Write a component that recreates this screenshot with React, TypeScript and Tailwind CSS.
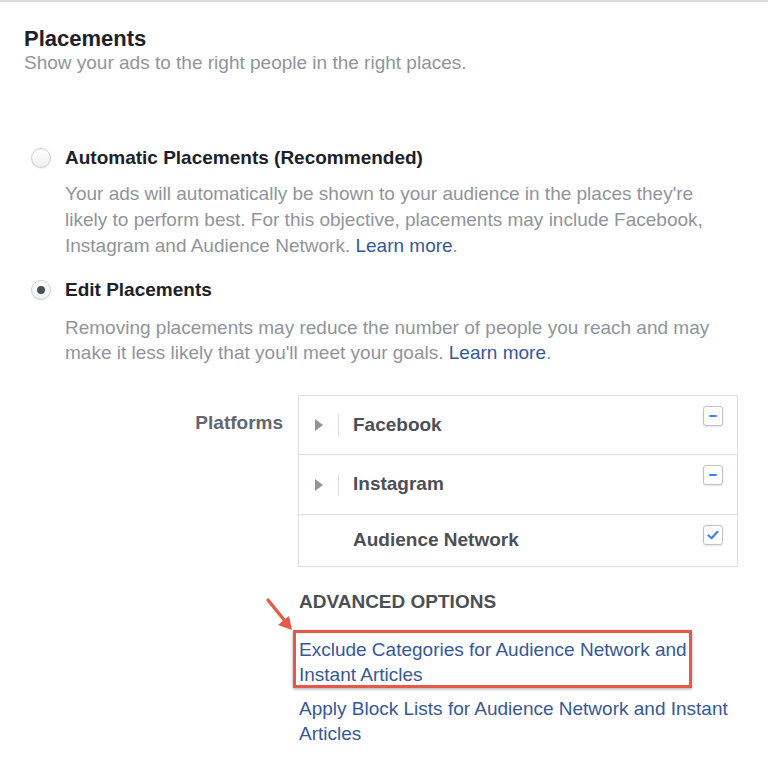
import React from "react";

function Radio({ checked }: { checked?: boolean }) {
  return (
    <div className="w-5 h-5 rounded-full border border-[#ccd0d5] bg-gradient-to-b from-white to-[#eef0f2] flex items-center justify-center shadow-[0_1px_1px_rgba(0,0,0,0.06)]">
      {checked && <div className="w-2 h-2 rounded-full bg-[#4b4f56]"></div>}
    </div>
  );
}

function Checkbox({ mode }: { mode: "minus" | "check" }) {
  return (
    <div className="w-5 h-5 rounded-[3px] border border-[#bec3c9] bg-white shadow-[0_1px_2px_rgba(0,0,0,0.12)] flex items-center justify-center">
      {mode === "minus" ? (
        <div className="w-2 h-[2px] bg-[#4080ff] rounded-sm"></div>
      ) : (
        <svg width="12" height="10" viewBox="0 0 12 10">
          <path d="M1.5 5.5 L4.5 8.3 L10.5 1.8" fill="none" stroke="#4080ff" strokeWidth="2.2" strokeLinecap="round" strokeLinejoin="round" />
        </svg>
      )}
    </div>
  );
}

function PlatformRow({ name, expandable, mode, className }: { name: string; expandable?: boolean; mode: "minus" | "check"; className?: string }) {
  return (
    <div className={`relative flex items-center ${className ?? ""}`}>
      {expandable ? (
        <>
          <svg className="ml-4" width="8" height="12" viewBox="0 0 8 12">
            <path d="M0 0 L8 6 L0 12 Z" fill="#8d949e" />
          </svg>
          <div className="ml-[15px] w-px h-[22px] bg-[#dddfe2]"></div>
          <span className="ml-[14px] text-[19px] font-bold text-[#4b4f56]">{name}</span>
        </>
      ) : (
        <span className="ml-[54px] text-[19px] font-bold text-[#4b4f56]">{name}</span>
      )}
      <div className="absolute right-[14px] top-[10px]">
        <Checkbox mode={mode} />
      </div>
    </div>
  );
}

export default function App() {
  return (
    <div className="relative w-[768px] h-[774px] overflow-hidden bg-white border-t-2 border-[#d9dbde] font-['Liberation_Sans',Arial,sans-serif]">
      <div className="pl-6 pt-6">
        <h2 className="text-[22px] leading-[26px] font-bold text-[#1d2129]">Placements</h2>
        <p className="text-[19px] leading-[22px] text-[#90949c]">Show your ads to the right people in the right places.</p>
      </div>

      <div className="pl-[31px] mt-[71px] flex items-center h-[26px]">
        <Radio />
        <span className="ml-[14px] text-[19px] font-bold text-[#1d2129]">Automatic Placements (Recommended)</span>
      </div>
      <p className="ml-[65px] mt-[10px] text-[19px] leading-[26px] text-[#90949c]">
        Your ads will automatically be shown to your audience in the places they're
        <br />
        likely to perform best. For this objective, placements may include Facebook,
        <br />
        Instagram and Audience Network. <span className="text-[#365899]">Learn more</span>.
      </p>

      <div className="pl-[31px] mt-[18px] flex items-center h-[26px]">
        <Radio checked />
        <span className="ml-[14px] text-[19px] font-bold text-[#1d2129]">Edit Placements</span>
      </div>
      <p className="ml-[65px] mt-[12px] text-[19px] leading-[25px] text-[#90949c]">
        Removing placements may reduce the number of people you reach and may
        <br />
        make it less likely that you'll meet your goals. <span className="text-[#365899]">Learn more</span>.
      </p>

      <div className="mt-[30px] flex">
        <div className="w-[283px] pt-[15px] text-right text-[19px] leading-[26px] font-bold text-[#606770]">Platforms</div>
        <div className="ml-[15px] w-[440px] border border-[#dddfe2]">
          <PlatformRow name="Facebook" expandable mode="minus" className="h-[58px]" />
          <PlatformRow name="Instagram" expandable mode="minus" className="h-[60px] border-t border-[#dddfe2]" />
          <PlatformRow name="Audience Network" mode="check" className="h-[52px] border-t border-[#dddfe2]" />
        </div>
      </div>

      <div className="ml-[299px] mt-[22px]">
        <div className="text-[19px] leading-[26px] font-bold text-[#4b4f56]">ADVANCED OPTIONS</div>
        <div className="relative mt-[22px]">
          <div className="text-[19px] leading-[25px] text-[#365899]">
            Exclude Categories for Audience Network and
            <br />
            Instant Articles
          </div>
          <div className="absolute left-[-6px] top-[-7px] w-[399px] h-[58px] border-[3px] border-[#e5594a] shadow-[0_1px_3px_rgba(0,0,0,0.35)]"></div>
        </div>
        <div className="mt-[9px] text-[19px] leading-[25px] text-[#365899]">
          Apply Block Lists for Audience Network and Instant
          <br />
          Articles
        </div>
      </div>

      <svg className="absolute left-[262px] top-[592px]" width="34" height="40" viewBox="0 0 34 40">
        <path d="M6 6 L23 27" stroke="#e5594a" strokeWidth="3.2" strokeLinecap="round" />
        <path d="M30 36 L16 31 L27 22 Z" fill="#e5594a" />
      </svg>
    </div>
  );
}
